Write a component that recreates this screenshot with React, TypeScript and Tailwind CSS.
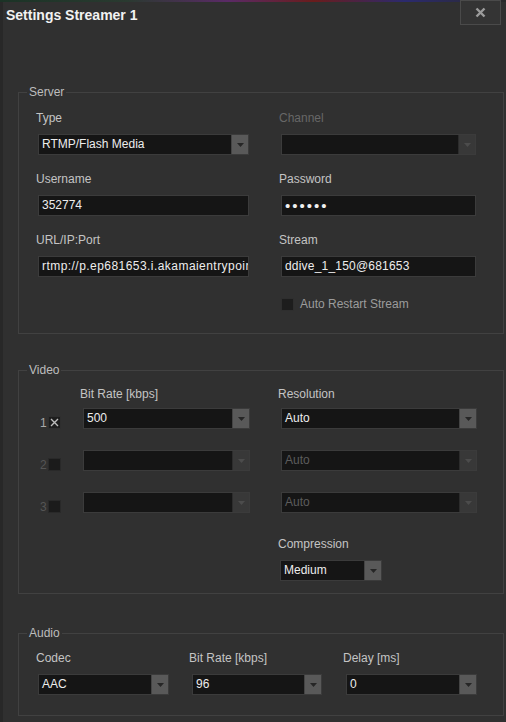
import React from 'react';

const font = { fontFamily: '"Liberation Sans", Arial, sans-serif' };

// small down-triangle drawn on the combo buttons
const Arrow = ({ disabled }: { disabled?: boolean }) => (
  <div
    className={`w-[17px] h-full flex items-center justify-center border-l ${
      disabled ? 'bg-[#383838] border-[#2c2c2c]' : 'bg-[#595959] border-[#444]'
    }`}
  >
    <svg width="7" height="4" viewBox="0 0 7 4">
      <path d="M0 0 L7 0 L3.5 4 Z" fill={disabled ? '#4c4c4c' : '#262626'} />
    </svg>
  </div>
);

const Combo = ({
  value,
  width,
  disabled,
}: {
  value?: string;
  width: string;
  disabled?: boolean;
}) => (
  <div className={`${width} h-[21px] flex border border-[#3b3b3b] bg-[#151515]`}>
    <div
      className={`flex-1 px-[3px] text-[12px] leading-[19px] truncate ${
        disabled ? 'text-[#5c5c5c]' : 'text-[#ededed]'
      }`}
    >
      {value}
    </div>
    <Arrow disabled={disabled} />
  </div>
);

const TextBox = ({ width, children }: { width: string; children?: React.ReactNode }) => (
  <div
    className={`${width} h-[21px] border border-[#3b3b3b] bg-[#151515] px-[3px] text-[12px] leading-[19px] text-[#ededed] whitespace-nowrap overflow-hidden`}
  >
    {children}
  </div>
);

const Label = ({ children, disabled }: { children: React.ReactNode; disabled?: boolean }) => (
  <div className={`h-[14px] text-[12px] leading-[14px] whitespace-nowrap ${disabled ? 'text-[#676767]' : 'text-[#c4c4c4]'}`}>
    {children}
  </div>
);

const Group = ({ title, children }: { title: string; children: React.ReactNode }) => (
  <fieldset className="ml-[18px] w-[486px] border border-[#414141]">
    <legend className="ml-[8px] px-[2px] text-[12px] leading-[14px] text-[#bdbdbd]">{title}</legend>
    {children}
  </fieldset>
);

const Check = ({ checked, dim }: { checked?: boolean; dim?: boolean }) => (
  <div
    className={`w-[13px] h-[13px] flex items-center justify-center border ${
      dim ? 'bg-[#1b1b1b] border-[#292929]' : 'bg-[#1d1d1d] border-[#2e2e2e]'
    }`}
  >
    {checked && (
      <svg width="9" height="9" viewBox="0 0 9 9">
        <path d="M1 1 L8 8 M8 1 L1 8" stroke="#bdbdbd" strokeWidth="1.4" />
      </svg>
    )}
  </div>
);

const VideoRow = ({ n, checked, bitrate, res }: { n: number; checked?: boolean; bitrate?: string; res: string }) => (
  <div className="flex items-end">
    <div className="w-[43px] flex items-end">
      <span className={`text-[12px] leading-[12px] w-[8px] ${checked ? 'text-[#a8a8a8]' : 'text-[#555]'}`}>{n}</span>
      <Check checked={checked} dim={!checked} />
    </div>
    <Combo width="w-[167px]" value={bitrate} disabled={!checked} />
    <div className="ml-[31px]">
      <Combo width="w-[196px]" value={res} disabled={!checked} />
    </div>
  </div>
);

const App = () => {
  return (
    <div
      className="w-[506px] h-[722px] bg-[#303030] overflow-hidden shadow-[inset_3px_0_0_#282828]"
      style={font}
    >
      {/* top edge strip */}
      <div className="h-[2px] bg-[linear-gradient(90deg,#1b3326_0%,#2a3a30_25%,#5a2a66_45%,#6a1c1c_62%,#2b2a6e_80%,#2a2a2a_100%)]" />

      {/* Title bar */}
      <div className="flex justify-between items-start h-[24px]">
        <div className="pl-[6px] pt-[5px] text-[14px] leading-[16px] font-bold text-[#f2f2f2]">Settings Streamer 1</div>
        <div className="mr-[5px] -mt-[2px] w-[41px] h-[25px] border border-[#4a4a4a] bg-[#343434] flex items-center justify-center">
          <svg width="11" height="11" viewBox="0 0 11 11">
            <path d="M1.5 1.5 L9.5 9.5 M9.5 1.5 L1.5 9.5" stroke="#9c9c9c" strokeWidth="2.4" />
          </svg>
        </div>
      </div>

      {/* Server */}
      <div className="mt-[59px]">
        <Group title="Server">
          <div className="pl-[17px] pt-[12px] pb-[22px]">
            <div className="grid grid-cols-[243px_1fr] gap-y-[17px]">
              <div>
                <Label>Type</Label>
                <div className="mt-[9px] ml-[2px]">
                  <Combo width="w-[211px]" value="RTMP/Flash Media" />
                </div>
              </div>
              <div>
                <Label disabled>Channel</Label>
                <div className="mt-[9px] ml-[2px]">
                  <Combo width="w-[195px]" disabled />
                </div>
              </div>
              <div>
                <Label>Username</Label>
                <div className="mt-[9px] ml-[2px]">
                  <TextBox width="w-[211px]">352774</TextBox>
                </div>
              </div>
              <div>
                <Label>Password</Label>
                <div className="mt-[9px] ml-[2px]">
                  <TextBox width="w-[195px]">
                    <span className="text-[15px] tracking-[2px] text-[#f0f0f0]">••••••</span>
                  </TextBox>
                </div>
              </div>
              <div>
                <Label>URL/IP:Port</Label>
                <div className="mt-[9px] ml-[2px]">
                  <TextBox width="w-[211px]">
                    <span className="tracking-[0.45px]">rtmp://p.ep681653.i.akamaientrypoir</span>
                  </TextBox>
                </div>
              </div>
              <div>
                <Label>Stream</Label>
                <div className="mt-[9px] ml-[2px]">
                  <TextBox width="w-[195px]">
                    <span className="tracking-[0.2px]">ddive_1_150@681653</span>
                  </TextBox>
                </div>
                <div className="mt-[21px] ml-[2px] flex items-center gap-[6px]">
                  <Check />
                  <span className="text-[12px] leading-[13px] text-[#9c9c9c]">Auto Restart Stream</span>
                </div>
              </div>
            </div>
          </div>
        </Group>
      </div>

      {/* Video */}
      <div className="mt-[29px]">
        <Group title="Video">
          <div className="pl-[21px] pt-[10px] pb-[12px]">
            <div className="flex">
              <div className="w-[40px]" />
              <div className="w-[198px]">
                <Label>Bit Rate [kbps]</Label>
              </div>
              <Label>Resolution</Label>
            </div>
            <div className="mt-[7px] flex flex-col gap-[21px]">
              <VideoRow n={1} checked bitrate="500" res="Auto" />
              <VideoRow n={2} res="Auto" />
              <VideoRow n={3} res="Auto" />
            </div>
            <div className="mt-[24px] ml-[238px]">
              <Label>Compression</Label>
              <div className="mt-[9px] ml-[2px]">
                <Combo width="w-[102px]" value="Medium" />
              </div>
            </div>
          </div>
        </Group>
      </div>

      {/* Audio */}
      <div className="mt-[32px]">
        <Group title="Audio">
          <div className="pl-[17px] pt-[11px] pb-[20px]">
            <div className="grid grid-cols-[153px_154px_1fr]">
              <div>
                <Label>Codec</Label>
                <div className="mt-[9px] ml-[2px]">
                  <Combo width="w-[131px]" value="AAC" />
                </div>
              </div>
              <div>
                <Label>Bit Rate [kbps]</Label>
                <div className="mt-[9px] ml-[3px]">
                  <Combo width="w-[130px]" value="96" />
                </div>
              </div>
              <div>
                <Label>Delay [ms]</Label>
                <div className="mt-[9px] ml-[3px]">
                  <Combo width="w-[131px]" value="0" />
                </div>
              </div>
            </div>
          </div>
        </Group>
      </div>
    </div>
  );
};

export default App;
